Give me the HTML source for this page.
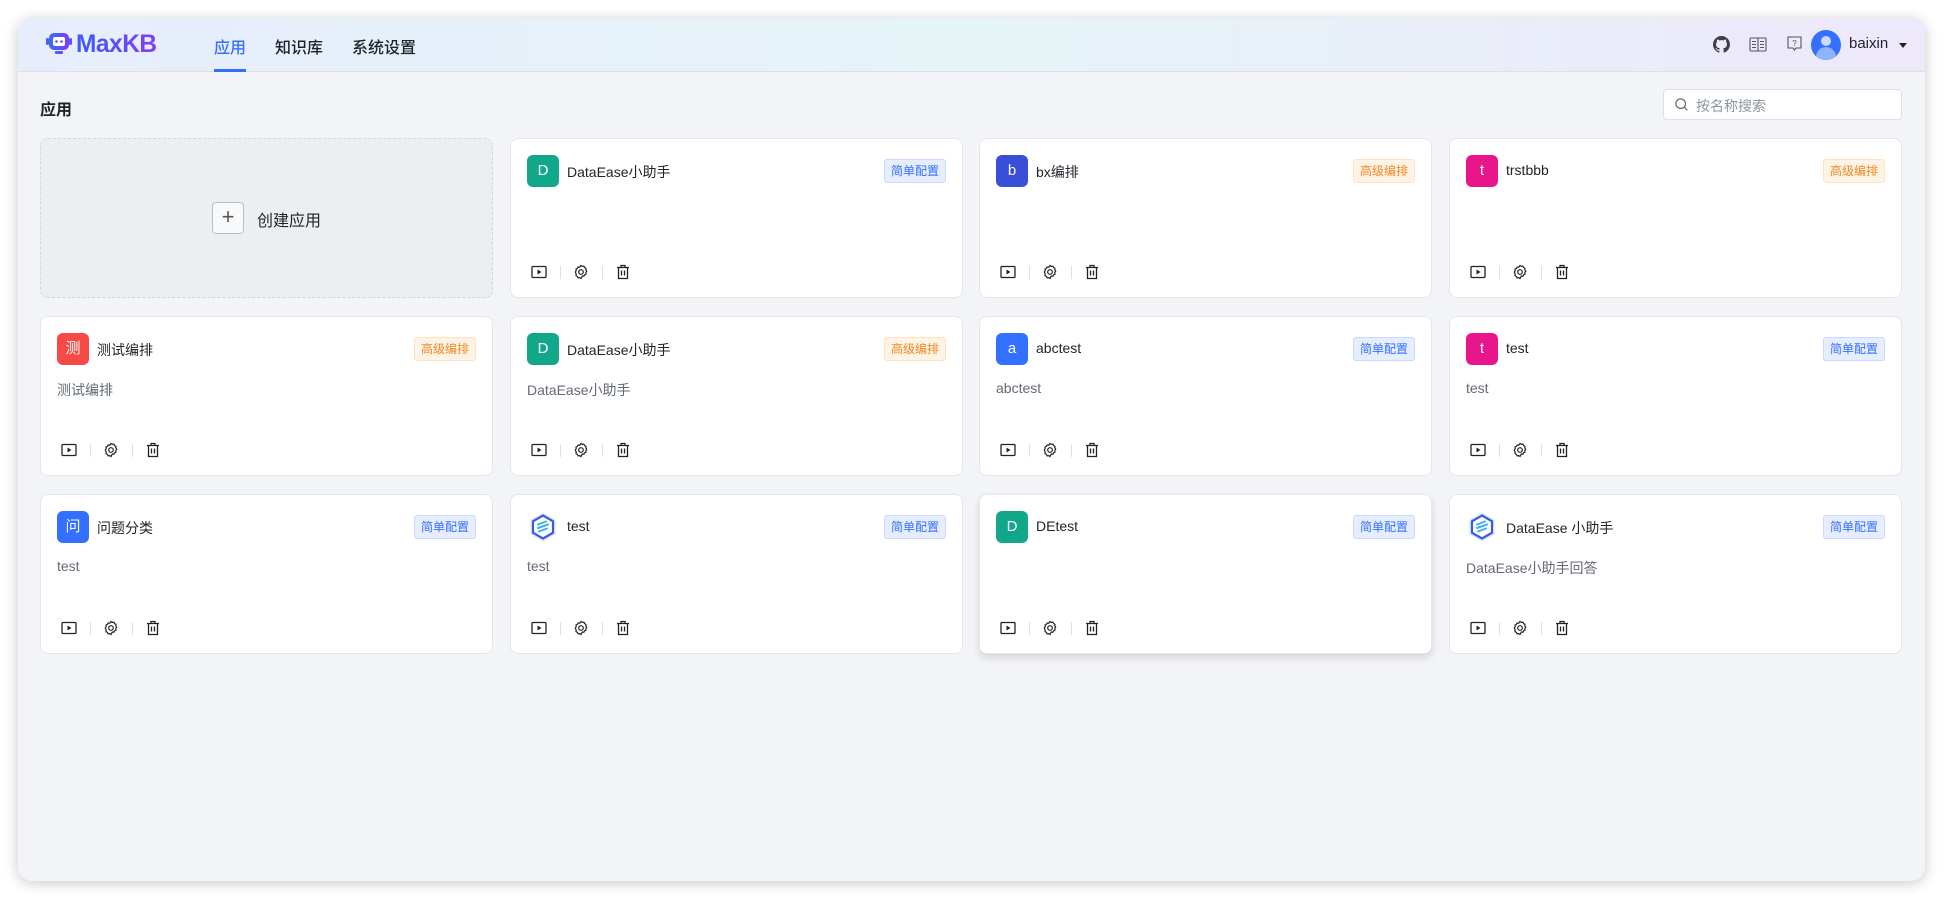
<!DOCTYPE html>
<html><head><meta charset="utf-8"><style>
*{box-sizing:border-box;margin:0;padding:0}
body{width:1944px;height:899px;background:#fff;font-family:"Liberation Sans","Noto Sans CJK SC",sans-serif;position:relative;overflow:hidden;color:#1f2329}
.win{position:absolute;left:18px;top:18px;width:1907px;height:863px;border-radius:14px;background:#f3f4f7;box-shadow:0 2px 14px rgba(0,0,0,.22);overflow:hidden}
.hdr{position:absolute;left:0;top:0;width:100%;height:54px;background:linear-gradient(90deg,#e7edfc 0%,#e5f4f7 50%,#eee8fb 100%);border-bottom:1px solid #dee0e3}
.nav{position:absolute;top:16px;font-size:16px;color:#1f2329;font-weight:500}
.abs{position:absolute}
.card{position:absolute;width:453px;height:160px;background:#fff;border:1px solid #e4e6ea;border-radius:8px}
.av{position:absolute;left:16px;top:16px;width:32px;height:32px;border-radius:6px;color:#fff;font-size:15px;text-align:center;line-height:32px}
.hx{position:absolute;left:16px;top:16px}
.nm{position:absolute;left:56px;top:23px;font-size:14px;color:#1f2329}
.tag{position:absolute;right:16px;top:20px;width:62px;height:24px;border-radius:3px;font-size:12px;text-align:center;line-height:22px}
.s{color:#3370ff;background:#e6edff;border:1px solid #c9d8ff}
.a{color:#f08a24;background:#fff3e6;border:1px solid #ffe2c2}
.ds{position:absolute;left:16px;top:63px;font-size:14px;color:#646a73}
.ic{position:absolute;top:125px;left:20px;width:110px;height:16px}
.ic svg{position:absolute;top:0}
.dv{position:absolute;top:2px;width:1px;height:13px;background:#dee0e3}
</style></head><body>
<svg width="0" height="0" style="position:absolute">
<defs>
<symbol id="play" viewBox="0 0 16 16"><rect x="1" y="2.5" width="14" height="11" rx="1" fill="none" stroke="#1f2329" stroke-width="1.3"/><path d="M6.5 5.5v5l4-2.5z" fill="#1f2329"/></symbol>
<symbol id="gear" viewBox="0 0 16 16"><path d="M8 1.5l1.3.9 1.6-.2.7 1.4 1.4.7-.2 1.6.9 1.3-.9 1.3.2 1.6-1.4.7-.7 1.4-1.6-.2L8 14.5l-1.3-.9-1.6.2-.7-1.4-1.4-.7.2-1.6L2.3 8l.9-1.3-.2-1.6 1.4-.7.7-1.4 1.6.2z" fill="none" stroke="#1f2329" stroke-width="1.2"/><circle cx="8" cy="8" r="2.3" fill="none" stroke="#1f2329" stroke-width="1.2"/></symbol>
<symbol id="trash" viewBox="0 0 16 16"><path d="M2 3.5h12M6 3.5V1.5h4v2M3.5 3.5v11h9v-11M6.5 6.5v5M9.5 6.5v5" fill="none" stroke="#1f2329" stroke-width="1.3"/></symbol>
<symbol id="hex" viewBox="0 0 32 32"><path d="M16 1.5l12.5 7.2v14.6L16 30.5 3.5 23.3V8.7z" fill="#dbe6ff"/><path d="M16 4.5l10 5.8v11.4L16 27.5 6 21.7V10.3z" fill="#fff" stroke="#3a5ce0" stroke-width="2.2"/><path d="M11 13.5l8-3M11 17l10-3.5M12 20.5l8-3" stroke="#3bb0f0" stroke-width="2" stroke-linecap="round"/></symbol>
</defs></svg>
<div class="win">
<div class="hdr">
 <svg class="abs" style="left:28px;top:14px" width="26" height="24" viewBox="0 0 26 24"><defs><linearGradient id="g" x1="0" x2="1"><stop offset="0" stop-color="#3370ff"/><stop offset="1" stop-color="#7f3bf5"/></linearGradient></defs><rect x="3" y="1" width="20" height="17" rx="5" fill="url(#g)"/><rect x="0" y="6" width="3" height="7" rx="1.5" fill="url(#g)"/><rect x="23" y="6" width="3" height="7" rx="1.5" fill="url(#g)"/><rect x="7" y="5" width="12" height="9" rx="2" fill="#fff"/><circle cx="10.5" cy="9.5" r="1.3" fill="#5a4ef5"/><circle cx="15.5" cy="9.5" r="1.3" fill="#5a4ef5"/><rect x="9" y="19" width="8" height="3" rx="1" fill="url(#g)"/></svg>
 <div class="abs" style="left:58px;top:12px;font-size:25px;font-weight:bold;background:linear-gradient(90deg,#3a5cff,#8040f0);-webkit-background-clip:text;color:transparent;letter-spacing:-0.5px;transform:scaleX(0.98);transform-origin:left">MaxKB</div>
 <div class="nav" style="left:196px;color:#3370ff">应用</div>
 <div class="abs" style="left:196px;top:51px;width:32px;height:3px;background:#3370ff"></div>
 <div class="nav" style="left:257px">知识库</div>
 <div class="nav" style="left:334px">系统设置</div>
 <svg class="abs" style="left:1695px;top:18px" width="17" height="17" viewBox="0 0 16 16"><path fill="#3b3f45" d="M8 0C3.58 0 0 3.58 0 8c0 3.54 2.29 6.53 5.47 7.59.4.07.55-.17.55-.38v-1.33c-2.23.48-2.7-1.07-2.7-1.07-.36-.93-.89-1.17-.89-1.17-.73-.5.05-.49.05-.49.8.06 1.23.83 1.23.83.71 1.23 1.87.87 2.33.67.07-.52.28-.87.5-1.07-1.78-.2-3.64-.89-3.64-3.95 0-.87.31-1.59.82-2.15-.08-.2-.36-1.02.08-2.12 0 0 .67-.21 2.2.82.64-.18 1.32-.27 2-.27s1.36.09 2 .27c1.53-1.04 2.2-.82 2.2-.82.44 1.1.16 1.92.08 2.12.51.56.82 1.27.82 2.15 0 3.07-1.87 3.75-3.65 3.95.29.25.54.73.54 1.48v2.2c0 .21.15.46.55.38A8.01 8.01 0 0016 8c0-4.42-3.58-8-8-8z"/></svg>
 <svg class="abs" style="left:1731px;top:19px" width="18" height="15" viewBox="0 0 18 15" fill="none" stroke="#555" stroke-width="1.1"><rect x="1" y="1" width="16" height="13" rx="1"/><path d="M9 1v13M3 4.5h4M3 7.5h4M3 10.5h4M11 4.5h4M11 7.5h4M11 10.5h4"/></svg>
 <svg class="abs" style="left:1769px;top:18px" width="15" height="16" viewBox="0 0 15 16" fill="none" stroke="#555" stroke-width="1.1"><path d="M1 1h13v11H9l-1.5 2L6 12H1z"/><text x="7.5" y="10" font-size="8" text-anchor="middle" fill="#555" stroke="none" font-family="Liberation Sans">?</text></svg>
 <div class="abs" style="left:1793px;top:12px;width:30px;height:30px;border-radius:50%;background:#3370ff;overflow:hidden"><div class="abs" style="left:10px;top:6px;width:10px;height:10px;border-radius:50%;background:#c8dcff"></div><div class="abs" style="left:5px;top:17px;width:20px;height:14px;border-radius:10px 10px 0 0;background:#8fb4ff"></div></div>
 <div class="abs" style="left:1831px;top:17px;font-size:15px;color:#1f2329">baixin</div>
 <div class="abs" style="left:1881px;top:25px;width:0;height:0;border-left:4.5px solid transparent;border-right:4.5px solid transparent;border-top:5px solid #1f2329"></div>
</div>
<div class="abs" style="left:22px;top:78px;font-size:16px;font-weight:bold">应用</div>
<div class="abs" style="left:1645px;top:71px;width:239px;height:31px;background:#fff;border:1px solid #dee0e3;border-radius:4px">
 <svg class="abs" style="left:11px;top:8px" width="13" height="13" viewBox="0 0 13 13" fill="none" stroke="#646a73" stroke-width="1.2"><circle cx="5.7" cy="5.7" r="4.8"/><path d="M9.3 9.3l3 3"/></svg>
 <div class="abs" style="left:32px;top:6px;font-size:14px;color:#8f959e">按名称搜索</div>
</div>
</div>

<div class="abs" style="left:40px;top:138px;width:453px;height:160px;background:#eceef1;border:1px dashed #d4d7dc;border-radius:8px">
 <div class="abs" style="left:171px;top:63px;width:32px;height:32px;border:1px solid #bbbfc4;border-radius:4px;background:#f8f9fa;text-align:center;line-height:28px;font-size:22px;color:#555">+</div>
 <div class="abs" style="left:216px;top:68px;font-size:16px;color:#1f2329">创建应用</div>
</div>

<div class="card" style="left:510px;top:138px"><div class="av" style="background:#10a888">D</div><div class="nm">DataEase小助手</div><div class="tag s">简单配置</div><div class="ic"><svg style="left:0" width="16" height="16"><use href="#play"/></svg><div class="dv" style="left:29px"></div><svg style="left:42px" width="16" height="16"><use href="#gear"/></svg><div class="dv" style="left:71px"></div><svg style="left:84px" width="16" height="16"><use href="#trash"/></svg></div></div>
<div class="card" style="left:979px;top:138px"><div class="av" style="background:#3a4fd8">b</div><div class="nm">bx编排</div><div class="tag a">高级编排</div><div class="ic"><svg style="left:0" width="16" height="16"><use href="#play"/></svg><div class="dv" style="left:29px"></div><svg style="left:42px" width="16" height="16"><use href="#gear"/></svg><div class="dv" style="left:71px"></div><svg style="left:84px" width="16" height="16"><use href="#trash"/></svg></div></div>
<div class="card" style="left:1449px;top:138px"><div class="av" style="background:#e8168a">t</div><div class="nm">trstbbb</div><div class="tag a">高级编排</div><div class="ic"><svg style="left:0" width="16" height="16"><use href="#play"/></svg><div class="dv" style="left:29px"></div><svg style="left:42px" width="16" height="16"><use href="#gear"/></svg><div class="dv" style="left:71px"></div><svg style="left:84px" width="16" height="16"><use href="#trash"/></svg></div></div>

<div class="card" style="left:40px;top:316px"><div class="av" style="background:#f54a45">测</div><div class="nm">测试编排</div><div class="tag a">高级编排</div><div class="ds">测试编排</div><div class="ic"><svg style="left:0" width="16" height="16"><use href="#play"/></svg><div class="dv" style="left:29px"></div><svg style="left:42px" width="16" height="16"><use href="#gear"/></svg><div class="dv" style="left:71px"></div><svg style="left:84px" width="16" height="16"><use href="#trash"/></svg></div></div>
<div class="card" style="left:510px;top:316px"><div class="av" style="background:#10a888">D</div><div class="nm">DataEase小助手</div><div class="tag a">高级编排</div><div class="ds">DataEase小助手</div><div class="ic"><svg style="left:0" width="16" height="16"><use href="#play"/></svg><div class="dv" style="left:29px"></div><svg style="left:42px" width="16" height="16"><use href="#gear"/></svg><div class="dv" style="left:71px"></div><svg style="left:84px" width="16" height="16"><use href="#trash"/></svg></div></div>
<div class="card" style="left:979px;top:316px"><div class="av" style="background:#3370ff">a</div><div class="nm">abctest</div><div class="tag s">简单配置</div><div class="ds">abctest</div><div class="ic"><svg style="left:0" width="16" height="16"><use href="#play"/></svg><div class="dv" style="left:29px"></div><svg style="left:42px" width="16" height="16"><use href="#gear"/></svg><div class="dv" style="left:71px"></div><svg style="left:84px" width="16" height="16"><use href="#trash"/></svg></div></div>
<div class="card" style="left:1449px;top:316px"><div class="av" style="background:#e8168a">t</div><div class="nm">test</div><div class="tag s">简单配置</div><div class="ds">test</div><div class="ic"><svg style="left:0" width="16" height="16"><use href="#play"/></svg><div class="dv" style="left:29px"></div><svg style="left:42px" width="16" height="16"><use href="#gear"/></svg><div class="dv" style="left:71px"></div><svg style="left:84px" width="16" height="16"><use href="#trash"/></svg></div></div>

<div class="card" style="left:40px;top:494px"><div class="av" style="background:#3370ff">问</div><div class="nm">问题分类</div><div class="tag s">简单配置</div><div class="ds">test</div><div class="ic"><svg style="left:0" width="16" height="16"><use href="#play"/></svg><div class="dv" style="left:29px"></div><svg style="left:42px" width="16" height="16"><use href="#gear"/></svg><div class="dv" style="left:71px"></div><svg style="left:84px" width="16" height="16"><use href="#trash"/></svg></div></div>
<div class="card" style="left:510px;top:494px"><svg class="hx" width="32" height="32"><use href="#hex"/></svg><div class="nm">test</div><div class="tag s">简单配置</div><div class="ds">test</div><div class="ic"><svg style="left:0" width="16" height="16"><use href="#play"/></svg><div class="dv" style="left:29px"></div><svg style="left:42px" width="16" height="16"><use href="#gear"/></svg><div class="dv" style="left:71px"></div><svg style="left:84px" width="16" height="16"><use href="#trash"/></svg></div></div>
<div class="card" style="left:979px;top:494px;box-shadow:0 4px 8px rgba(0,0,0,.12)"><div class="av" style="background:#10a888">D</div><div class="nm">DEtest</div><div class="tag s">简单配置</div><div class="ic"><svg style="left:0" width="16" height="16"><use href="#play"/></svg><div class="dv" style="left:29px"></div><svg style="left:42px" width="16" height="16"><use href="#gear"/></svg><div class="dv" style="left:71px"></div><svg style="left:84px" width="16" height="16"><use href="#trash"/></svg></div></div>
<div class="card" style="left:1449px;top:494px"><svg class="hx" width="32" height="32"><use href="#hex"/></svg><div class="nm">DataEase 小助手</div><div class="tag s">简单配置</div><div class="ds">DataEase小助手回答</div><div class="ic"><svg style="left:0" width="16" height="16"><use href="#play"/></svg><div class="dv" style="left:29px"></div><svg style="left:42px" width="16" height="16"><use href="#gear"/></svg><div class="dv" style="left:71px"></div><svg style="left:84px" width="16" height="16"><use href="#trash"/></svg></div></div>
</body></html>
